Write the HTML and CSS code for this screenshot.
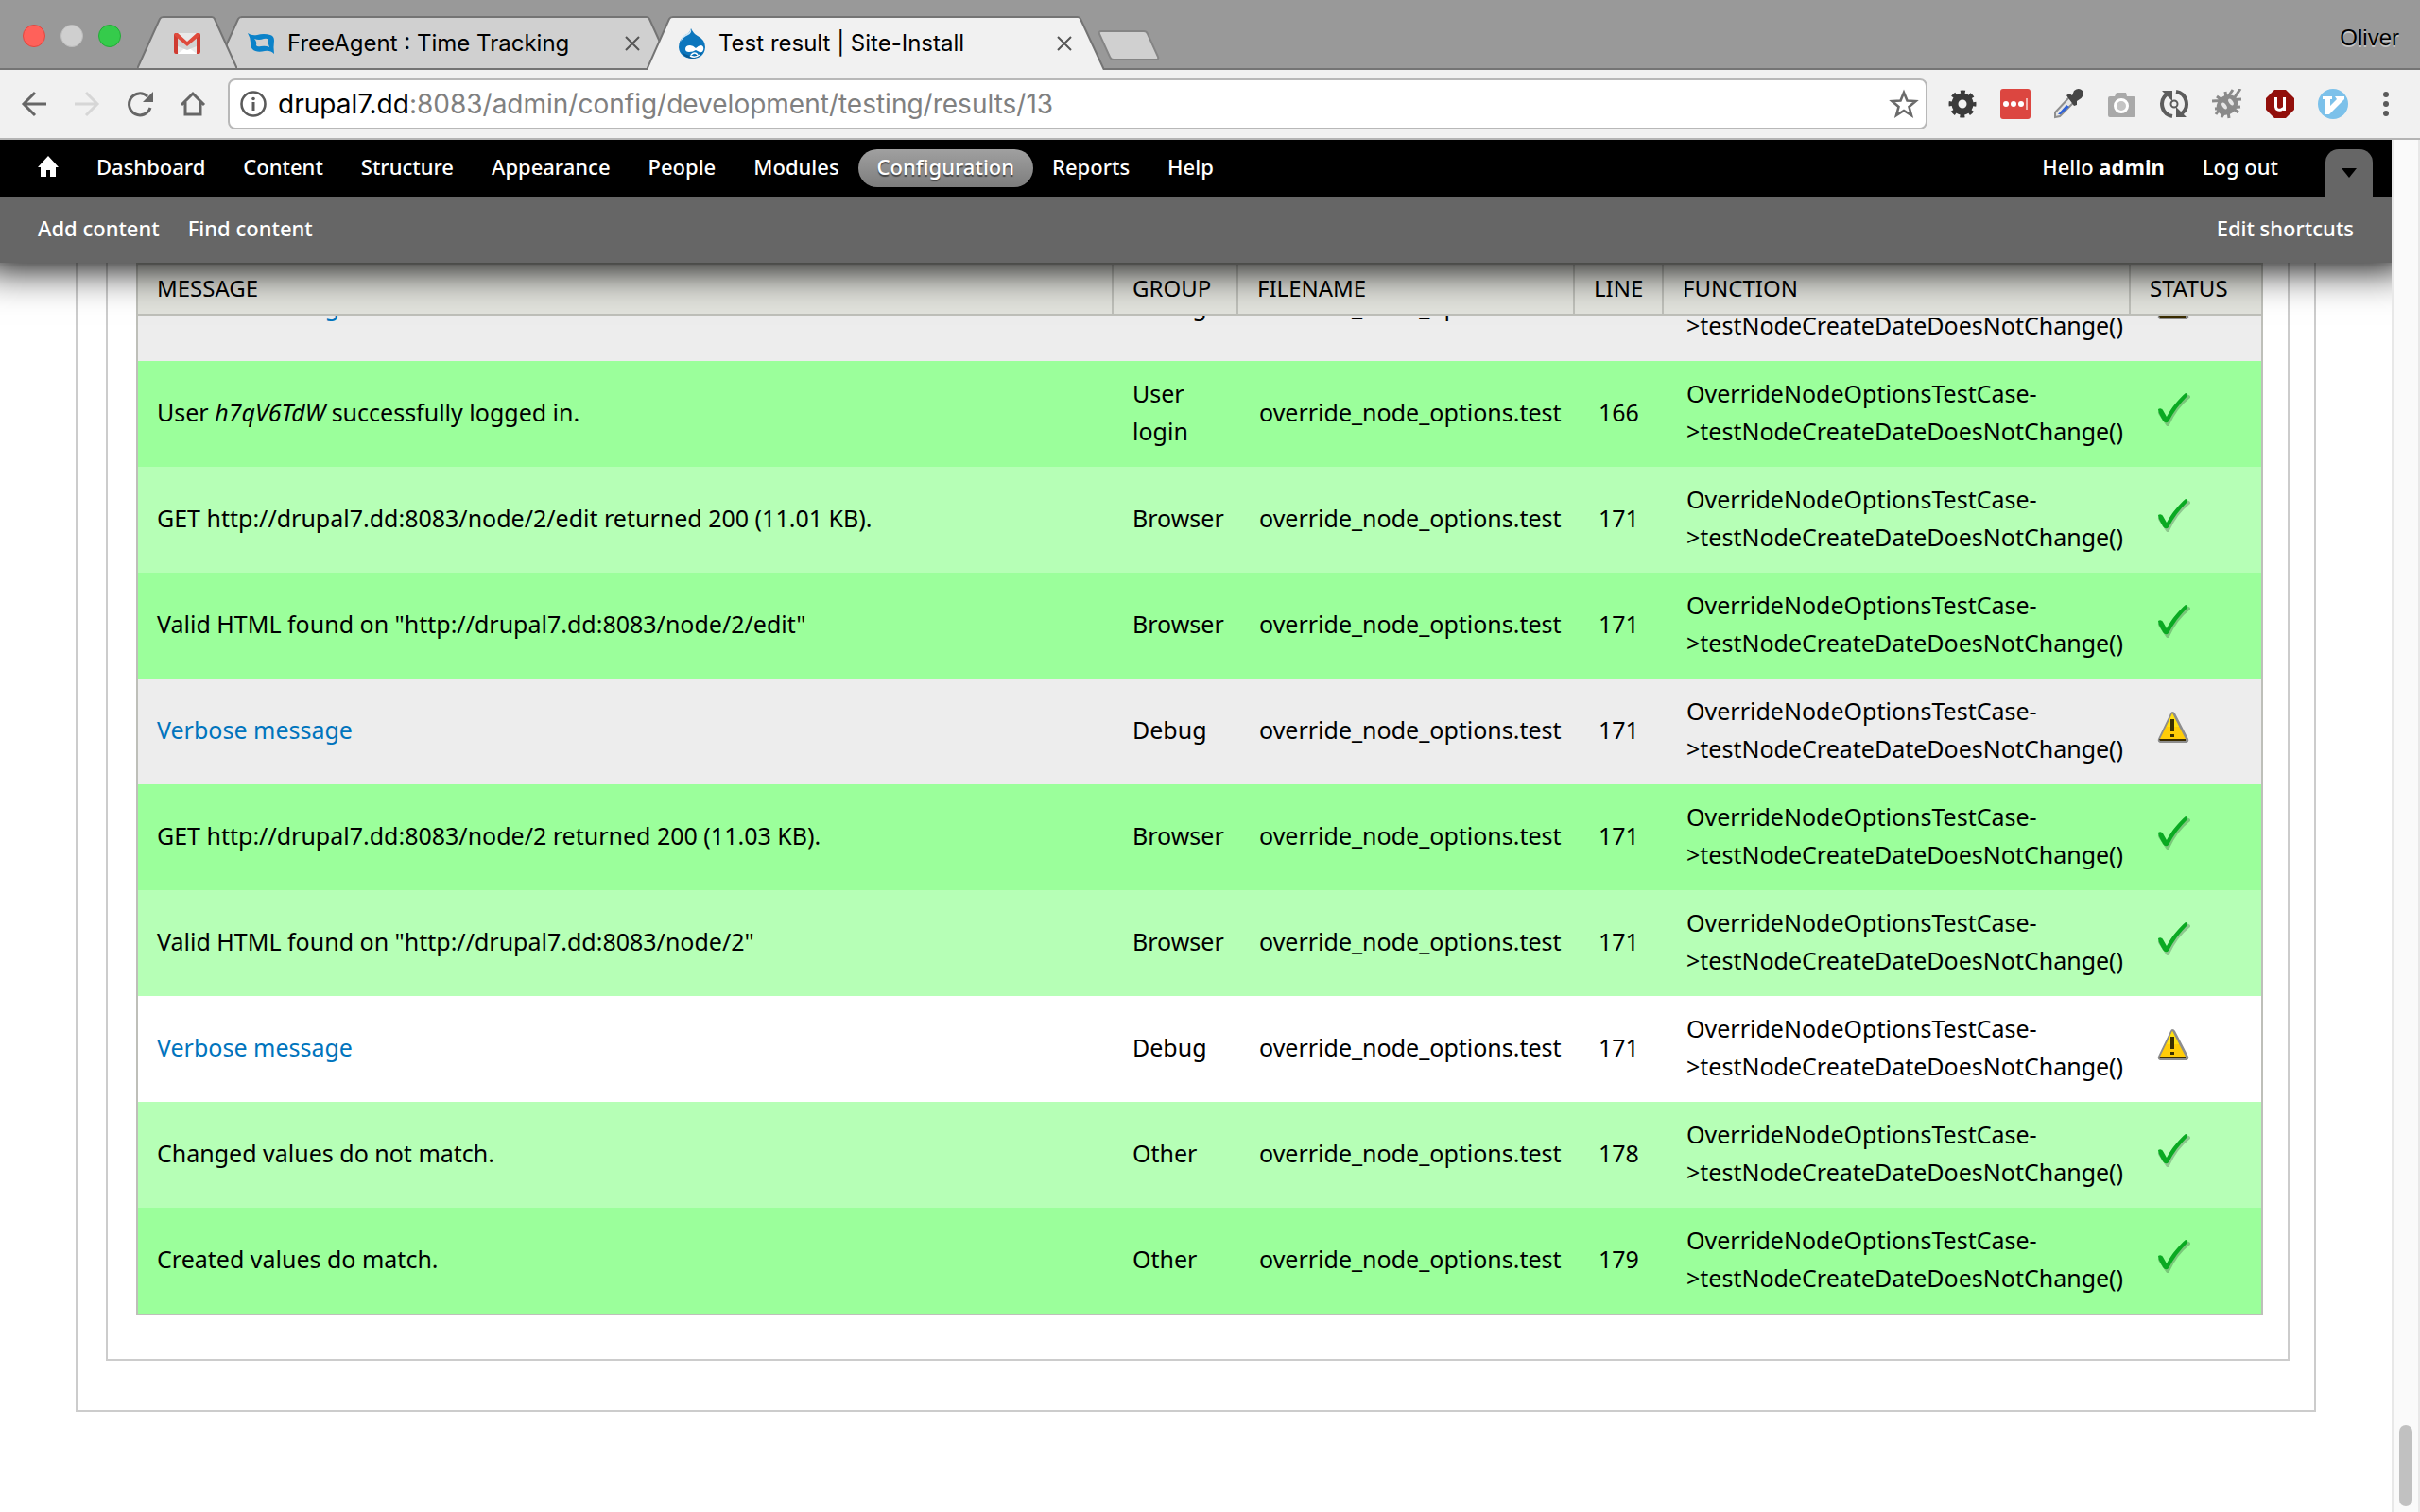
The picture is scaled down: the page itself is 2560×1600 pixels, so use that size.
FILE: index.html
```html
<!DOCTYPE html>
<html lang="en">
<head>
<meta charset="utf-8">
<title>Test result | Site-Install</title>
<link rel="stylesheet" href="styles.css">
</head>
<body>
<svg class="defs" aria-hidden="true">
  <symbol id="check" viewBox="0 0 36 36">
    <path d="M4 22 L12 34 C17 23 25 12 34 5" fill="none" stroke="#000" stroke-opacity=".22" stroke-width="4" stroke-linecap="round" stroke-linejoin="round"/>
    <path d="M2 18 Q5 16 7 19 L11 26 C17 15 24 7 31 1 Q34 1 33 4 C25 12 18 21 13 31 Q10 34 7 30 C5 26 2 22 2 18Z" fill="#0aaa22"/>
  </symbol>
  <symbol id="warning" viewBox="0 0 36 36">
    <path d="M17 2 Q19 2 20 4 L34 31 Q35 34 32 35 H4 Q1 34 2 31 L15 4 Q16 2 17 2Z" fill="#8d8d8d"/>
    <path d="M17 4 L31 31 H4Z" fill="#ffcc08"/>
    <path d="M17 4 L24 18 H11Z" fill="#ffe012"/>
    <path d="M3 31 H31 V33 H4Z" fill="#3a2c00"/>
    <path d="M15 10 H19 V23 H15Z M15 26 H19 V29 H15Z" fill="#3b3000"/>
  </symbol>
  <symbol id="close" viewBox="0 0 16 16">
    <path d="M1 1 L15 15 M15 1 L1 15" stroke="#555" stroke-width="2" fill="none"/>
  </symbol>
</svg>

<header class="tabstrip">
  <div class="lights">
    <button class="light red" aria-label="Close window"></button>
    <button class="light gray" aria-label="Minimise window"></button>
    <button class="light green" aria-label="Full screen"></button>
  </div>
  <div class="tab tab-pinned">
    <svg class="tab-shape" viewBox="0 0 106 74" aria-hidden="true"><path d="M0 73 L24 20 Q25 18 28 18 H79 Q81 18 82 20 L106 73Z" fill="#d0d0d0" stroke="#747474" stroke-width="2"/></svg>
    <svg class="favicon" viewBox="0 0 28 22" role="img" aria-label="Gmail">
      <rect width="28" height="22" rx="2" fill="#e9e9e9"/>
      <path d="M4 22 L14 14 L24 22Z" fill="#fff"/>
      <path d="M4 4 L14 14 L24 4 V14 L14 18 L4 14Z" fill="#d2d2d2"/>
      <path d="M0 2 Q0 0 2 0 L4 1 V22 H2 Q0 22 0 20Z M28 2 Q28 0 26 0 L24 1 V22 H26 Q28 22 28 20Z" fill="#cf3b31"/>
      <path d="M1 0 H4 L14 9 L24 0 H27 Q28 2 27 3 L14 14 L1 3 Q0 2 1 0Z" fill="#df4a3c"/>
    </svg>
  </div>
  <div class="tab tab-inactive">
    <svg class="tab-shape" viewBox="0 0 483 74" aria-hidden="true"><path d="M0 73 L24 20 Q25 18 28 18 H456 Q458 18 459 20 L483 73Z" fill="#d0d0d0" stroke="#747474" stroke-width="2"/></svg>
    <svg class="favicon" viewBox="0 0 28 22" aria-hidden="true"><path d="M0 0 Q4 3 10 2 Q17 0 24 2 Q28 3 28 8 Q27 15 28 22 Q24 18 18 19 Q9 21 5 17 Q3 15 3 10 Q3 5 0 0Z M7 6 Q10 9 9 13 Q10 15 14 14 Q19 13 23 15 Q21 11 22 8 Q22 5 17 6 Q12 8 7 6Z" fill="#0b82c9" fill-rule="evenodd"/></svg>
    <span class="tab-title">FreeAgent : Time Tracking</span>
    <button class="tab-close" aria-label="Close tab"><svg viewBox="0 0 16 16"><use href="#close"/></svg></button>
  </div>
  <div class="tab tab-active">
    <svg class="tab-shape" viewBox="0 0 484 74" aria-hidden="true"><path d="M0 74 L24 20 Q25 18 28 18 H456 Q458 18 459 20 L484 74Z" fill="#f1f1f1"/><path d="M0 74 L24 20 Q25 18 28 18 H456 Q458 18 459 20 L484 74" fill="none" stroke="#747474" stroke-width="2"/></svg>
    <svg class="favicon drop" viewBox="0 0 28 32" aria-hidden="true">
      <path d="M13 0 Q15 5 20 8 Q28 12 28 20 Q27 32 14 32 Q1 31 0 20 Q0 12 7 7 Q12 5 13 0Z" fill="#0c76bd"/>
      <path d="M13 1 Q14 5 10 7 Q5 9 2 14 Q3 8 8 6 Q12 4 13 1Z" fill="#cfe6f5"/>
      <path d="M3 25 Q14 33 25 25 Q22 32 14 32 Q6 31 3 25Z" fill="#075a95"/>
      <path d="M7 22 Q7 18 12 18 Q15 18 18 21 Q21 18 24 18 Q27 19 26 23 Q25 26 22 25 L18 23 Q15 25 11 25 Q7 25 7 22Z" fill="#fff"/>
      <path d="M13 28 Q17 24 20 28 M12 29 Q17 32 22 28" fill="none" stroke="#fff" stroke-width="1.5"/>
    </svg>
    <span class="tab-title">Test result | Site-Install</span>
    <button class="tab-close" aria-label="Close tab"><svg viewBox="0 0 16 16"><use href="#close"/></svg></button>
  </div>
  <button class="new-tab" aria-label="New tab"><svg viewBox="0 0 66 34"><path d="M3 1 H48 Q51 1 52 4 L63 28 Q64 31 61 31 H16 Q13 31 12 28 L1 4 Q0 1 3 1Z" fill="#d0d0d0" stroke="#858585" stroke-width="2"/></svg></button>
  <span class="profile">Oliver</span>
</header>

<nav class="toolbar" aria-label="Browser">
  <button class="tool" aria-label="Back"><svg viewBox="0 0 32 32"><path d="M29 16 H5 M17 4 L5 16 L17 28" fill="none" stroke="#666" stroke-width="3"/></svg></button>
  <button class="tool" aria-label="Forward"><svg viewBox="0 0 32 32"><path d="M3 16 H27 M15 4 L27 16 L15 28" fill="none" stroke="#d6d6d6" stroke-width="3"/></svg></button>
  <button class="tool" aria-label="Reload"><svg viewBox="0 0 32 32"><path d="M27 20 A11.5 11.5 0 1 1 24 8" fill="none" stroke="#666" stroke-width="3"/><path d="M30 3 V14 H19Z" fill="#666"/></svg></button>
  <button class="tool" aria-label="Home"><svg viewBox="0 0 32 32"><path d="M4 17 L16 5 L28 17 M8 14 V27 H24 V14" fill="none" stroke="#666" stroke-width="3"/></svg></button>
  <div class="omnibox">
    <svg class="info" viewBox="0 0 32 32" aria-hidden="true"><circle cx="16" cy="16" r="12.5" fill="none" stroke="#5a5a5a" stroke-width="2.6"/><path d="M16 14 V23" stroke="#5a5a5a" stroke-width="3"/><circle cx="16" cy="10.5" r="1.8" fill="#5a5a5a"/></svg>
    <span class="url" role="textbox" aria-label="Address"><span class="host">drupal7.dd</span>:8083/admin/config/development/testing/results/13</span>
    <button class="star" aria-label="Bookmark"><svg viewBox="0 0 32 32"><path d="M16 4 L19.5 12.5 L28.5 13 L21.5 19 L24 28 L16 23 L8 28 L10.5 19 L3.5 13 L12.5 12.5Z" fill="none" stroke="#6a6a6a" stroke-width="2.6"/></svg></button>
  </div>
  <div class="extensions">
    <button class="tool" aria-label="Settings"><svg viewBox="0 0 32 32"><circle cx="16" cy="16" r="8" fill="none" stroke="#3a3a3a" stroke-width="7"/><circle cx="16" cy="16" r="12.5" fill="none" stroke="#3a3a3a" stroke-width="4" stroke-dasharray="4.9 4.917" stroke-dashoffset="2.45"/></svg></button>
    <button class="tool" aria-label="Passwords"><svg viewBox="0 0 32 32"><rect width="32" height="32" rx="3" fill="#dc4640"/><circle cx="6" cy="16" r="3" fill="#fff"/><circle cx="14" cy="16" r="3" fill="#fff"/><circle cx="22" cy="16" r="3" fill="#fff"/><path d="M28 10 V22" stroke="#fff" stroke-opacity=".8" stroke-width="1.5"/></svg></button>
    <button class="tool" aria-label="Colour picker"><svg viewBox="0 0 32 32"><path d="M2 30 V25 L17 9 L22 14 L7 29Z" fill="#e6e6e6" stroke="#8f8f8f" stroke-width="2"/><path d="M5 27 L14 17 L17 19 L8 27Z" fill="#2f62d8"/><path d="M14 7 L17 5 L20 7 L22 2 Q27 -2 31 2 Q33 8 28 11 L25 13 L25 17 L22 18Z" fill="#454545"/></svg></button>
    <button class="tool" aria-label="Screenshot"><svg viewBox="0 0 32 32"><path d="M4 8 H9 L11 4 H21 L22 8 H29 Q31 8 31 11 V28 Q31 30 29 30 H4 Q2 30 2 28 V10 Q2 8 4 8Z" fill="#a9a9a9"/><circle cx="16" cy="18" r="6.5" fill="#c4c4c4" stroke="#fff" stroke-width="3"/></svg></button>
    <button class="tool" aria-label="Refresh"><svg viewBox="0 0 32 32"><path d="M14 29 A13 13 0 0 1 8 6 M18 3 A13 13 0 0 1 24 26" fill="none" stroke="#5c5c5c" stroke-width="4"/><path d="M3 2 H14 V13Z M29 30 H18 V19Z" fill="#5c5c5c"/><circle cx="16" cy="16" r="3.5" fill="none" stroke="#5c5c5c" stroke-width="2"/></svg></button>
    <button class="tool" aria-label="Debugger"><svg viewBox="0 0 32 32"><path d="M14 3 L18 31 M5 8 L28 25 M0 13 L31 11 M4 27 L22 1 M10 30 L30 0 M3 21 L30 19" stroke="#8a8a8a" stroke-width="3"/><ellipse cx="16" cy="17" rx="12" ry="10" transform="rotate(-40 16 17)" fill="#8a8a8a"/><ellipse cx="13" cy="18" rx="2" ry="4" transform="rotate(-35 13 18)" fill="#e6e6e6"/><ellipse cx="20" cy="14" rx="2" ry="4" transform="rotate(-35 20 14)" fill="#e6e6e6"/></svg></button>
    <button class="tool" aria-label="Blocker"><svg viewBox="0 0 32 32"><path d="M10 1 H22 L31 10 V22 L22 31 H10 L1 22 V10Z" fill="#920f0b"/><path d="M11.5 9 V19 Q12 23 17 22 L20.5 20 M20.5 9 V23" fill="none" stroke="#fff" stroke-width="3"/></svg></button>
    <button class="tool" aria-label="Vim keys"><svg viewBox="0 0 32 32"><circle cx="16" cy="16" r="16" fill="#7cc1ea"/><path d="M5 8 H15 V11 H13 V18 L20 11 L18 8 H28 V11 L12 27 H8 V11 H5Z" fill="#fff"/></svg></button>
    <button class="tool" aria-label="Menu"><svg viewBox="0 0 32 32"><circle cx="16" cy="6" r="3" fill="#5a5a5a"/><circle cx="16" cy="16" r="3" fill="#5a5a5a"/><circle cx="16" cy="26" r="3" fill="#5a5a5a"/></svg></button>
  </div>
</nav>

<div class="window">
  <div class="page">
    <div class="admin">
      <nav class="admin-menu" aria-label="Administration">
        <a href="#" aria-label="Home"><svg class="home" viewBox="0 0 22 22"><path d="M11 0 L22 12 H19 V22 H13 V15 H9 V22 H3 V12 H0Z" fill="#fff"/></svg></a>
        <a href="#">Dashboard</a>
        <a href="#">Content</a>
        <a href="#">Structure</a>
        <a href="#">Appearance</a>
        <a href="#">People</a>
        <a href="#">Modules</a>
        <a href="#" class="current">Configuration</a>
        <a href="#">Reports</a>
        <a href="#">Help</a>
        <a href="#" class="user">Hello <strong>admin</strong></a>
        <a href="#">Log out</a>
        <button class="drawer-toggle" aria-label="Hide shortcuts"><svg viewBox="0 0 16 10"><path d="M0 0 H16 L8 10Z" fill="#000"/></svg></button>
      </nav>
      <nav class="shortcuts" aria-label="Shortcuts">
        <a href="#">Add content</a>
        <a href="#">Find content</a>
        <a href="#" class="edit">Edit shortcuts</a>
      </nav>
    </div>

    <main class="outer">
      <section class="inner">
        <table class="sticky">
          <colgroup><col><col class="h-group"><col class="h-file"><col class="h-line"><col class="h-func"><col class="h-status"></colgroup>
          <thead><tr><th>MESSAGE</th><th>GROUP</th><th>FILENAME</th><th>LINE</th><th>FUNCTION</th><th>STATUS</th></tr></thead>
        </table>
        <table class="results" aria-label="Test results">
          <colgroup><col><col class="c-group"><col class="c-file"><col class="c-line"><col class="c-func"><col class="c-status"></colgroup>
          <tbody>
            <tr class="debug odd"><td><a href="#">Verbose message</a></td><td>Debug</td><td>override_node_options.test</td><td>166</td><td>OverrideNodeOptionsTestCase-<br>&gt;testNodeCreateDateDoesNotChange()</td><td><svg class="status" role="img" aria-label="Debug"><use href="#warning"/></svg></td></tr>
            <tr class="pass even"><td>User <em>h7qV6TdW</em> successfully logged in.</td><td>User login</td><td>override_node_options.test</td><td>166</td><td>OverrideNodeOptionsTestCase-<br>&gt;testNodeCreateDateDoesNotChange()</td><td><svg class="status" role="img" aria-label="Pass"><use href="#check"/></svg></td></tr>
            <tr class="pass odd"><td>GET http://drupal7.dd:8083/node/2/edit returned 200 (11.01 KB).</td><td>Browser</td><td>override_node_options.test</td><td>171</td><td>OverrideNodeOptionsTestCase-<br>&gt;testNodeCreateDateDoesNotChange()</td><td><svg class="status" role="img" aria-label="Pass"><use href="#check"/></svg></td></tr>
            <tr class="pass even"><td>Valid HTML found on "http://drupal7.dd:8083/node/2/edit"</td><td>Browser</td><td>override_node_options.test</td><td>171</td><td>OverrideNodeOptionsTestCase-<br>&gt;testNodeCreateDateDoesNotChange()</td><td><svg class="status" role="img" aria-label="Pass"><use href="#check"/></svg></td></tr>
            <tr class="debug odd"><td><a href="#">Verbose message</a></td><td>Debug</td><td>override_node_options.test</td><td>171</td><td>OverrideNodeOptionsTestCase-<br>&gt;testNodeCreateDateDoesNotChange()</td><td><svg class="status" role="img" aria-label="Debug"><use href="#warning"/></svg></td></tr>
            <tr class="pass even"><td>GET http://drupal7.dd:8083/node/2 returned 200 (11.03 KB).</td><td>Browser</td><td>override_node_options.test</td><td>171</td><td>OverrideNodeOptionsTestCase-<br>&gt;testNodeCreateDateDoesNotChange()</td><td><svg class="status" role="img" aria-label="Pass"><use href="#check"/></svg></td></tr>
            <tr class="pass odd"><td>Valid HTML found on "http://drupal7.dd:8083/node/2"</td><td>Browser</td><td>override_node_options.test</td><td>171</td><td>OverrideNodeOptionsTestCase-<br>&gt;testNodeCreateDateDoesNotChange()</td><td><svg class="status" role="img" aria-label="Pass"><use href="#check"/></svg></td></tr>
            <tr class="debug even"><td><a href="#">Verbose message</a></td><td>Debug</td><td>override_node_options.test</td><td>171</td><td>OverrideNodeOptionsTestCase-<br>&gt;testNodeCreateDateDoesNotChange()</td><td><svg class="status" role="img" aria-label="Debug"><use href="#warning"/></svg></td></tr>
            <tr class="pass odd"><td>Changed values do not match.</td><td>Other</td><td>override_node_options.test</td><td>178</td><td>OverrideNodeOptionsTestCase-<br>&gt;testNodeCreateDateDoesNotChange()</td><td><svg class="status" role="img" aria-label="Pass"><use href="#check"/></svg></td></tr>
            <tr class="pass even"><td>Created values do match.</td><td>Other</td><td>override_node_options.test</td><td>179</td><td>OverrideNodeOptionsTestCase-<br>&gt;testNodeCreateDateDoesNotChange()</td><td><svg class="status" role="img" aria-label="Pass"><use href="#check"/></svg></td></tr>
          </tbody>
        </table>
      </section>
    </main>
  </div>
  <div class="scrollbar"><div class="thumb"></div></div>
</div>
</body>
</html>
```
FILE: styles.css
```css
* { box-sizing: border-box; }

body {
  margin: 0;
  height: 100vh;
  display: flex;
  flex-direction: column;
  overflow: hidden;
  background: #fff;
  color: #000;
  font: 24px/40px "Noto Sans", sans-serif;
}

button {
  border: 0;
  padding: 0;
  background: none;
}

a { text-decoration: none; }

.defs {
  position: absolute;
  width: 0;
  height: 0;
}

/* Tab strip */
.tabstrip {
  flex: none;
  display: flex;
  height: 74px;
  padding: 0 22px 0 24px;
  background: #999;
  box-shadow: inset 0 -2px #747474;
  font-family: Inter, sans-serif;
}

.lights {
  display: flex;
  gap: 16px;
  width: 121px;
  padding-top: 26px;
}

.light {
  width: 24px;
  height: 24px;
  border-radius: 50%;
}

.red { background: #ff615a; border: 1px solid #e2473f; }
.gray { background: #cfcfcf; border: 1px solid #bdbdbd; }
.green { background: #35cb4b; border: 1px solid #24ab38; }

.tab {
  position: relative;
  display: flex;
  align-items: center;
  padding-top: 18px;
}

.tab-shape {
  position: absolute;
  inset: 0;
  width: 100%;
  height: 74px;
}

.tab-pinned {
  z-index: 2;
  width: 106px;
  padding-left: 39px;
}

.tab-inactive {
  z-index: 1;
  width: 483px;
  margin-left: -23px;
  padding-left: 34px;
}

.tab-active {
  z-index: 3;
  width: 484px;
  margin-left: -27px;
  padding-left: 34px;
}

.favicon {
  position: relative;
  width: 28px;
  height: 22px;
}

.drop { height: 32px; }

.tab-title {
  position: relative;
  flex: 1;
  margin-left: 14px;
}

.tab-close {
  position: relative;
  display: flex;
  margin-right: 34px;
}

.tab-close svg { width: 16px; height: 16px; }

.new-tab {
  display: flex;
  margin: 32px 0 0 -6px;
  align-self: flex-start;
}

.new-tab svg { width: 66px; height: 34px; }

.profile {
  margin: 20px 0 0 auto;
  font-family: "Liberation Sans", sans-serif;
  text-shadow: 0 2px #c4c4c4;
}

/* Address bar */
.toolbar {
  flex: none;
  display: flex;
  align-items: center;
  height: 74px;
  padding: 0 8px;
  background: #f1f1f1;
  border-bottom: 2px solid #b4b4b4;
}

.tool {
  display: flex;
  justify-content: center;
  width: 56px;
}

.tool svg,
.info,
.star svg {
  display: block;
  width: 32px;
  height: 32px;
}

.omnibox {
  flex: 1;
  display: flex;
  align-items: center;
  height: 54px;
  margin: 0 9px;
  padding: 0 7px 0 9px;
  background: #fff;
  border: 2px solid #b8b8b8;
  border-radius: 8px;
}

.url {
  flex: 1;
  margin-left: 10px;
  color: #808080;
  font: 28px/40px Inter, sans-serif;
}

.host { color: #000; }

.extensions { display: flex; }

/* Page area */
.window {
  flex: 1;
  display: flex;
  min-height: 0;
}

.page {
  flex: 1;
  overflow: hidden;
}

.admin {
  position: relative;
  z-index: 2;
  background: #666;
  box-shadow: 0 -14px 40px 20px #000;
  font-size: 22px;
  font-weight: 500;
  line-height: 36px;
}

.admin a { color: #fff; }

.admin-menu {
  display: flex;
  align-items: center;
  height: 60px;
  padding: 0 20px;
  background: #000;
}

.admin-menu a {
  padding: 0 20px 4px;
  border-radius: 20px;
}

.home {
  display: block;
  width: 22px;
  height: 22px;
}

.admin-menu .current {
  background: linear-gradient(#a0a0a0, #7d7d7d);
  text-shadow: 0 2px 1px #444;
}

.admin-menu .user { margin-left: auto; }

.drawer-toggle {
  display: flex;
  align-items: center;
  justify-content: center;
  align-self: flex-end;
  width: 50px;
  height: 50px;
  margin-left: 30px;
  background: #666;
  border-radius: 14px 14px 0 0;
}

.drawer-toggle svg { width: 16px; height: 10px; }

.shortcuts {
  display: flex;
  gap: 30px;
  align-items: center;
  height: 70px;
  padding: 0 40px 4px;
}

.shortcuts .edit { margin-left: auto; }

.outer {
  margin: 0 80px;
  padding: 0 26px 52px 30px;
  border: 2px solid #ccc;
  border-top: 0;
}

.inner {
  padding: 0 26px 46px 30px;
  border: 2px solid #ccc;
  border-top: 0;
}

/* Results */
table {
  width: 100%;
  table-layout: fixed;
  border-spacing: 0;
  border: 2px solid #bebfb9;
}

.sticky {
  position: relative;
  z-index: 1;
  background: #e1e2dc;
}

th {
  height: 52px;
  padding: 0 0 2px 20px;
  text-align: left;
  font-weight: 400;
}

th + th { border-left: 2px solid #bebfb9; }

.h-group { width: 132px; }
.h-file { width: 356px; }
.h-line { width: 94px; }
.h-func { width: 494px; }
.h-status { width: 140px; }

/* The first row is scrolled part of the way under the header. */
.results {
  margin-top: -64px;
  border-top: 0;
  font-size: 25px;
}

.c-group { width: 134px; }
.c-file { width: 359px; }
.c-line { width: 93px; }
.c-func { width: 497px; }
.c-status { width: 131px; }

td {
  height: 112px;
  padding: 14px 10px 18px 20px;
  vertical-align: middle;
}

td a { color: #0074bd; }

.pass.even { background: #9bff9b; }
.pass.odd { background: #b6ffb6; }
.debug.odd { background: #ededed; }
.debug.even { background: #fff; }

.status {
  display: block;
  width: 36px;
  height: 36px;
  margin-bottom: 6px;
}

.scrollbar {
  display: flex;
  flex-direction: column;
  justify-content: flex-end;
  width: 30px;
  padding: 6px;
  background: #fafafa;
  border: solid #e8e8e8;
  border-width: 0 2px;
}

.thumb {
  height: 86px;
  background: #c1c1c1;
  border-radius: 8px;
}
```
